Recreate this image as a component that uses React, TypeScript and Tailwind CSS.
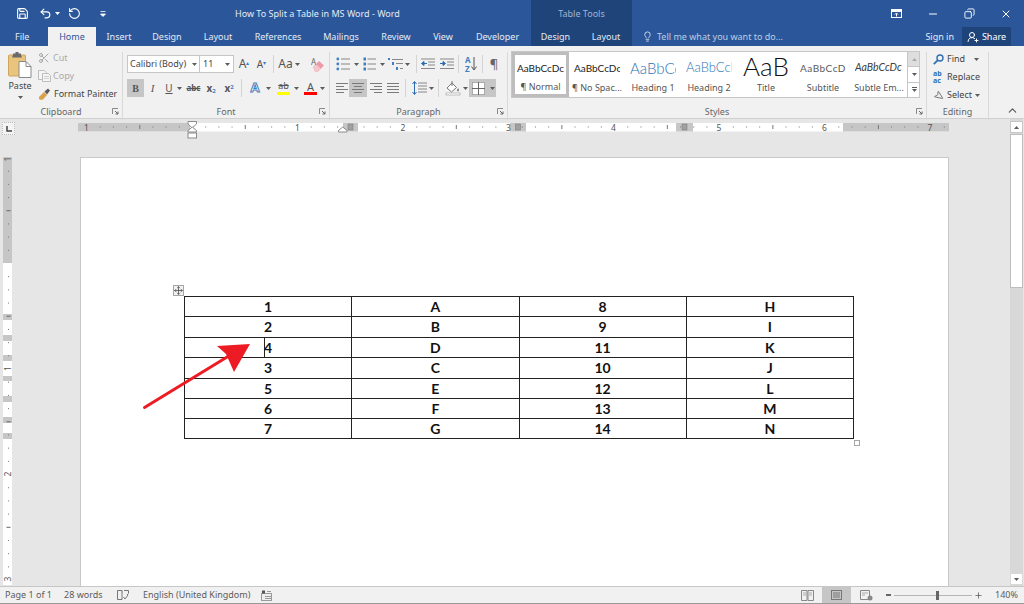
import React from "react";
import { Save, Undo2, RotateCcw, Minus, Copy, X, Lightbulb, UserRoundPlus, Scissors, ChevronUp, MousePointer2, Plus, Move } from "lucide-react";

const tabs = [
  { label: "Insert", w: "w-[46px]" },
  { label: "Design", w: "w-[50px]" },
  { label: "Layout", w: "w-[52px]" },
  { label: "References", w: "w-[68px]" },
  { label: "Mailings", w: "w-[58px]" },
  { label: "Review", w: "w-[52px]" },
  { label: "View", w: "w-[42px]" },
  { label: "Developer", w: "w-[67px]" },
];

const rows = [
  ["1", "A", "8", "H"],
  ["2", "B", "9", "I"],
  ["4", "D", "11", "K"],
  ["3", "C", "10", "J"],
  ["5", "E", "12", "L"],
  ["6", "F", "13", "M"],
  ["7", "G", "14", "N"],
];

const styleItems = [
  { name: "¶ No Spac...", preview: "AaBbCcDc", cls: "text-[10px] text-[#222]", box: "h-[28px] mt-[2px] w-[46px] items-center", w: "w-[56px]" },
  { name: "Heading 1", preview: "AaBbCcDd", cls: "text-[15px] font-light text-[#2e74b5]", box: "h-[28px] mt-[2px] w-[46px] items-center", w: "w-[56px]" },
  { name: "Heading 2", preview: "AaBbCcDd", cls: "text-[13px] font-light text-[#2e74b5]", box: "h-[28px] mt-[2px] w-[46px] items-center", w: "w-[56px]" },
  { name: "Title", preview: "AaB", cls: "text-[26px] leading-[19px] font-light text-[#111]", box: "h-[19px] mt-[5px] mb-[6px] w-[46px] items-end", w: "w-[58px]" },
  { name: "Subtitle", preview: "AaBbCcDd", cls: "text-[10px] tracking-[0.5px] text-[#5a5a5a]", box: "h-[28px] mt-[2px] w-[46px] items-center", w: "w-[56px]" },
  { name: "Subtle Em...", preview: "AaBbCcDc", cls: "text-[10.5px] italic text-[#404040]", box: "h-[28px] mt-[2px] w-[48px] items-center", w: "w-[56px]" },
];

const Caret = ({ className = "" }: { className?: string }) => (
  <svg width="5" height="3" viewBox="0 0 5 3" className={"shrink-0 " + className}>
    <path d="M0 0h5L2.5 3z" fill="#5c5c5c" />
  </svg>
);

const Sep = ({ className = "" }: { className?: string }) => <div className={"h-[18px] w-px bg-[#d4d4d4] shrink-0 " + className} />;

const Launcher = () => (
  <svg width="7" height="7" viewBox="0 0 7 7" className="absolute right-[3px] bottom-[3px]">
    <path d="M0.5 6V0.5H6" fill="none" stroke="#8a8a8a" />
    <path d="M3 3l3 3M6 3.5V6H3.5" fill="none" stroke="#666" />
  </svg>
);

const Group = ({ label, w, launcher = true, children }: { label: string; w: string; launcher?: boolean; children: React.ReactNode }) => (
  <div className={"relative flex flex-col shrink-0 " + w}>
    <div className="h-[59px]">{children}</div>
    <div className="h-[12px] leading-[12px] text-center text-[9px] text-[#666]">{label}</div>
    {launcher && <Launcher />}
  </div>
);

const GroupSep = () => <div className="w-px h-[68px] mt-[3px] bg-[#d9d9d9] shrink-0" />;

// small line-glyph icons of the paragraph group
const Bars = ({ lines, w = 13 }: { lines: [number, number][]; w?: number }) => (
  <svg width={w} height="12" viewBox={`0 0 ${w} 12`} className="shrink-0">
    {lines.map(([a, b], i) => (
      <rect key={i} x={a} y={1 + i * 3} width={b - a} height="1" fill="#7a7a7a" />
    ))}
  </svg>
);

const Bullets = () => (
  <svg width="14" height="14" viewBox="0 0 14 14" className="shrink-0">
    {[2, 7, 12].map((y) => (
      <g key={y}>
        <circle cx="1.8" cy={y} r="1.4" fill="#3f7fc1" />
        <rect x="5" y={y - 0.5} width="9" height="1" fill="#888" />
      </g>
    ))}
  </svg>
);

const Numbering = () => (
  <svg width="13" height="14" viewBox="0 0 13 14" className="shrink-0">
    {[2, 7, 12].map((y) => (
      <g key={y}>
        <rect x="0.5" y={y - 1.5} width="2.5" height="3" fill="#3f7fc1" />
        <rect x="4.5" y={y - 0.5} width="8.5" height="1" fill="#888" />
      </g>
    ))}
  </svg>
);

const Multilevel = () => (
  <svg width="16" height="14" viewBox="0 0 16 14" className="shrink-0">
    <rect x="0" y="1" width="2" height="2" fill="#3f7fc1" />
    <rect x="4" y="2" width="11" height="1" fill="#888" />
    <rect x="4" y="5" width="2" height="3" fill="#3f7fc1" />
    <rect x="8" y="6" width="7" height="1" fill="#888" />
    <rect x="8" y="10" width="2" height="3" fill="#3f7fc1" />
    <rect x="12" y="11" width="3" height="1" fill="#888" />
  </svg>
);

const Indent = ({ flip = false }: { flip?: boolean }) => (
  <svg width="14" height="12" viewBox="0 0 14 12" className="shrink-0">
    <path d="M0 1h14M7 4h7M7 7h7M0 10.5h14" stroke="#888" fill="none" />
    {flip ? <path d="M0 5.5h4M3 3.5l2.5 2-2.5 2z" stroke="#2b6cb0" fill="#2b6cb0" /> : <path d="M6 5.5H2M3 3.5l-2.5 2 2.5 2z" stroke="#2b6cb0" fill="#2b6cb0" />}
  </svg>
);

const Sort = () => (
  <div className="flex items-center w-[14px] shrink-0">
    <div className="flex flex-col leading-[9px] text-[8px] font-bold text-[#3f7fc1]">
      <span>A</span>
      <span>Z</span>
    </div>
    <svg width="6" height="14" viewBox="0 0 6 14">
      <path d="M3 0v12M0.5 9.5L3 13l2.5-3.5" stroke="#555" fill="none" />
    </svg>
  </div>
);

const LineSpacing = () => (
  <svg width="15" height="14" viewBox="0 0 15 14" className="shrink-0">
    <path d="M2.5 1v12M0.5 3L2.5 0.5 4.5 3M0.5 11l2 2.5 2-2.5" stroke="#2b6cb0" fill="none" />
    <path d="M6 2h9M6 5h9M6 8h9M6 11h9" stroke="#888" />
  </svg>
);

const Bucket = () => (
  <svg width="16" height="16" viewBox="0 0 16 16" className="shrink-0">
    <path d="M2 8l5-5 4.5 4.5-5 4.5z" fill="#fff" stroke="#777" />
    <path d="M7 1v5" stroke="#777" />
    <path d="M13 8c1 1.500 1.500 2.500 0.5 3.200-1 .5-1.800-.6-1.200-1.400z" fill="#777" />
    <rect x="1" y="13" width="14" height="2" fill="#fff" stroke="#9a9a9a" strokeWidth="0.6" />
  </svg>
);

const BorderGrid = () => (
  <svg width="13" height="13" viewBox="0 0 13 13" className="shrink-0">
    <rect x="0.500" y="0.500" width="12" height="12" fill="#fff" stroke="#777" strokeDasharray="1 1" />
    <path d="M6.500 0v13M0 6.500h13" stroke="#666" />
  </svg>
);

const PasteIcon = () => (
  <svg width="24" height="26" viewBox="0 0 24 26">
    <rect x="0.500" y="3" width="17" height="21" rx="1" fill="#e9c47c" stroke="#cda65c" />
    <path d="M5 3V1.500h2.500V0h3v1.500H13V3l1 2.500H4z" fill="#6b6b6b" />
    <path d="M11 9.500h7l5 5v11H11z" fill="#fff" stroke="#8a8a8a" />
    <path d="M18 9.500v5h5" fill="none" stroke="#8a8a8a" />
  </svg>
);

const CopyIcon = () => (
  <svg width="13" height="12" viewBox="0 0 13 12" className="shrink-0">
    <path d="M0.500 0.500h6l2 2v7h-8z" fill="#f5f5f5" stroke="#bdbdbd" />
    <path d="M4.500 3.500h6l2 2v6h-8z" fill="#f5f5f5" stroke="#bdbdbd" />
    <path d="M6 6.500h5M6 8.500h5" stroke="#cfcfcf" />
  </svg>
);

const BrushIcon = () => (
  <svg width="13" height="12" viewBox="0 0 13 12" className="shrink-0">
    <path d="M1 9l5-5 3 3-4 4.500c-1 .5-3 .5-4-.5z" fill="#d9a24a" />
    <path d="M6.500 3.500L10 0.500l2 2-3 4z" fill="#5a5a5a" />
  </svg>
);

const Eraser = () => (
  <svg width="14" height="17" viewBox="0 0 14 17">
    <path d="M2 11l6-6 5 4.500-6 6H4z" fill="#ee9aa6" />
    <path d="M2 11l3-3 4.500 4.500L7 15.500H4z" fill="#f7c5cc" />
    <text x="0" y="9" fontSize="8" fill="#666" fontFamily="Noto Sans">A</text>
  </svg>
);

const FindIcon = () => (
  <svg width="11" height="11" viewBox="0 0 11 11" className="shrink-0">
    <circle cx="7" cy="4" r="3" fill="none" stroke="#2f6fb5" strokeWidth="1.400" />
    <path d="M4.800 6.200L0.800 10.200" stroke="#2f6fb5" strokeWidth="1.800" />
  </svg>
);

const Arrow = () => (
  <svg width="115" height="72" viewBox="140 340 115 72" className="absolute left-[59px] top-[182px]">
    <path d="M144.500 407.500L232 354" stroke="#ed1c24" strokeWidth="3" strokeLinecap="round" fill="none" />
    <path d="M250 344L217 346L226 354L234 372z" fill="#ed1c24" />
  </svg>
);

const HRuler = () => {
  const ticks: React.ReactNode[] = [];
  for (let i = -9; i <= 57; i++) {
    const x = 192 + i * 13.19;
    if (i % 8 === 0) continue;
    if (i % 4 === 0) ticks.push(<rect key={i} x={x} y="125" width="1" height="4" fill="#777" />);
    else ticks.push(<rect key={i} x={x} y="126.500" width="1" height="1" fill="#777" />);
  }
  const nums: [number, string][] = [[86.500, "1"], [297.500, "1"], [403, "2"], [508.500, "3"], [613.500, "4"], [719, "5"], [824.500, "6"], [930, "7"]];
  return (
    <svg width="880" height="20" viewBox="78 120 880 20" className="shrink-0 mt-px">
      <rect x="78" y="123" width="871" height="8.500" fill="#fff" />
      <rect x="78" y="123" width="112" height="8.500" fill="#c6c6c6" />
      {[[343, 15], [510, 16], [676, 17], [843, 106]].map(([x, w]) => (
        <rect key={x} x={x} y="123" width={w} height="8.500" fill="#c6c6c6" />
      ))}
      {ticks}
      {nums.map(([x, t]) => (
        <text key={x} x={x} y="130.500" textAnchor="middle" fontSize="8.500" fill="#555" fontFamily="Noto Sans">{t}</text>
      ))}
      {[350.500, 518, 684.500].map((x) => (
        <rect key={x} x={x - 2.500} y="124" width="5" height="6" fill="#a0a0a0" stroke="#777" strokeWidth="0.500" />
      ))}
      <path d="M188 121.500h8.500v2.500l-4.250 4-4.250-4z" fill="#fff" stroke="#8a8a8a" />
      <path d="M188 132v-1.500l4.250-3.500 4.250 3.500V132z" fill="#fff" stroke="#8a8a8a" />
      <rect x="188" y="133" width="8.500" height="5" fill="#fff" stroke="#8a8a8a" />
      <path d="M338.500 132v-1.500l4.250-3.500 4.250 3.500V132z" fill="#fff" stroke="#8a8a8a" />
    </svg>
  );
};

const VRuler = () => {
  const ticks: React.ReactNode[] = [];
  for (let i = -7; i <= 24; i++) {
    const y = 263 + i * 13.19;
    if (i % 8 === 0) continue;
    if (i % 4 === 0) ticks.push(<rect key={i} x="6.500" y={y} width="4" height="1" fill="#666" />);
    else ticks.push(<rect key={i} x="8" y={y} width="1" height="1" fill="#777" />);
  }
  const nums: [number, string][] = [[159, "1"], [368.500, "1"], [474, "2"], [579, "3"]];
  const grey: [number, number][] = [[157, 106], [314, 6], [335, 6], [355, 6], [376, 5], [396, 6], [417, 6], [433, 6]];
  return (
    <svg width="80" height="428" viewBox="0 157 80 428" className="shrink-0">
      <rect x="3" y="157" width="9" height="428" fill="#fff" />
      {grey.map(([y, h]) => (
        <rect key={y} x="3" y={y} width="9" height={h} fill="#c6c6c6" />
      ))}
      {ticks}
      {nums.map(([y, t]) => (
        <text key={y} transform={`translate(11 ${y}) rotate(-90)`} textAnchor="middle" fontSize="8.500" fill="#555" fontFamily="Noto Sans">{t}</text>
      ))}
    </svg>
  );
};

export default function App() {
  return (
    <div className="w-[1024px] h-[604px] overflow-hidden flex flex-col bg-[#e6e6e6] font-['Noto_Sans',sans-serif] text-[9px] text-[#555]">
      {/* title bar */}
      <div className="h-[27px] flex bg-[#2b579a] text-[#e4ebf5] shrink-0">
        <div className="w-[531px] flex items-center shrink-0 relative">
          <Save size={13} className="ml-[16px] text-white" />
          <Undo2 size={13} className="ml-[10px] text-white" />
          <Caret className="ml-[3px] [&>path]:fill-white" />
          <RotateCcw size={13} className="ml-[8px] text-white" />
          <svg width="6" height="6" viewBox="0 0 6 6" className="ml-[19px]">
            <path d="M0.500 0.500h5M0.500 3h5l-2.500 2.500z" stroke="#fff" strokeWidth="0.800" fill="#fff" />
          </svg>
          <span className="ml-[129px] whitespace-nowrap">How To Split a Table in MS Word - Word</span>
        </div>
        <div className="w-[101px] bg-[#1f4479] flex items-center justify-center text-[#9fb4d3] shrink-0">Table Tools</div>
        <div className="flex-1 flex items-center justify-end">
          <svg width="11" height="9" viewBox="0 0 11 9" className="mr-[25px]">
            <rect x="0.500" y="0.500" width="10" height="8" fill="#2b579a" stroke="#fff" />
            <path d="M1 1h9v2H1z" fill="#fff" />
            <path d="M5.500 7.500v-3M4 5.500l1.500-1.500L7 5.500" stroke="#fff" fill="none" />
          </svg>
          <Minus size={12} className="mr-[25px] text-white" />
          <Copy size={11} className="mr-[25px] text-white -scale-x-100" />
          <X size={12} className="mr-[12px] text-white" />
        </div>
      </div>

      {/* tabs */}
      <div className="h-[19px] flex bg-[#2b579a] text-[#e4ebf5] leading-[19px] shrink-0">
        <div className="w-[48px] pl-[15px] shrink-0">File</div>
        <div className="w-[48px] text-center bg-[#f1f1f1] text-[#2b579a] shrink-0">Home</div>
        {tabs.map((t) => (
          <div key={t.label} className={"text-center shrink-0 " + t.w}>{t.label}</div>
        ))}
        <div className="w-[49px] text-center bg-[#1f4479] shrink-0">Design</div>
        <div className="w-[52px] text-center bg-[#1f4479] shrink-0">Layout</div>
        <div className="flex-1 flex items-center">
          <Lightbulb size={11} className="ml-[10px] text-[#d5e0ef]" />
          <span className="ml-[4px] text-[#bccde4]">Tell me what you want to do...</span>
          <span className="ml-auto">Sign in</span>
          <div className="ml-[8px] mr-[13px] w-[49px] h-[19px] bg-[#1f4479] flex items-center justify-center gap-[3px] text-white">
            <UserRoundPlus size={12} />
            <span>Share</span>
          </div>
        </div>
      </div>

      {/* ribbon */}
      <div className="h-[73px] flex bg-[#f1f1f1] border-b border-[#d0d0d0] pt-[3px] shrink-0">
        <Group label="Clipboard" w="w-[122px]">
          <div className="flex">
            <div className="w-[38px] flex flex-col items-center pt-[3px] pl-[2px] text-[#444]">
              <PasteIcon />
              <span className="mt-[1px] leading-[13px]">Paste</span>
              <Caret className="mt-[4px]" />
            </div>
            <div className="flex flex-col pt-[0px]">
              <div className="h-[18px] flex items-center gap-[3px] text-[#aaa]"><Scissors size={12} className="text-[#a8a8a8]" />Cut</div>
              <div className="h-[18px] flex items-center gap-[2px] text-[#aaa]"><CopyIcon />Copy</div>
              <div className="h-[18px] flex items-center gap-[3px] whitespace-nowrap text-[#444]"><BrushIcon />Format Painter</div>
            </div>
          </div>
        </Group>
        <GroupSep />

        <Group label="Font" w="w-[206px]">
          <div className="pl-[4px] pt-[6px] flex flex-col gap-[6px]">
            <div className="h-[18px] flex items-center">
              <div className="w-[73px] h-[18px] bg-white border border-[#c6c6c6] flex items-center justify-between px-[2px] text-[#444] whitespace-nowrap">Calibri (Body)<Caret /></div>
              <div className="w-[34px] h-[18px] bg-white border border-l-0 border-[#c6c6c6] flex items-center justify-between px-[3px] text-[#444]">11<Caret /></div>
              <div className="w-[18px] ml-[1px] text-center text-[12px] text-[#555]">A<sup className="text-[#3f7fc1] text-[6px]">▴</sup></div>
              <div className="w-[17px] text-center text-[10px] text-[#555]">A<sup className="text-[#3f7fc1] text-[6px]">▾</sup></div>
              <Sep className="ml-[3px]" />
              <div className="w-[30px] flex items-center justify-center gap-[2px] text-[12px] text-[#555]">Aa<Caret /></div>
              <div className="ml-[7px]"><Eraser /></div>
            </div>
            <div className="h-[18px] flex items-center">
              <div className="w-[17px] h-[18px] bg-[#c6c6c6] flex items-center justify-center font-bold text-[10px] font-['Liberation_Serif',serif]">B</div>
              <div className="w-[17px] text-center italic text-[11px] font-['Liberation_Serif',serif]">I</div>
              <div className="w-[16px] text-center underline text-[10px]">U</div>
              <Caret />
              <div className="w-[19px] ml-[2px] text-center line-through font-bold text-[8px]">abc</div>
              <div className="w-[18px] ml-[-1px] text-center font-bold text-[10px]">x<sub className="text-[#3f7fc1] text-[6px]">2</sub></div>
              <div className="w-[18px] text-center font-bold text-[10px]">x<sup className="text-[#3f7fc1] text-[6px]">2</sup></div>
              <Sep className="ml-[3px]" />
              <div className="w-[20px] ml-[3px] text-center font-bold text-[13px] text-white [-webkit-text-stroke:1px_#3f7fc1]">A</div>
              <Caret className="ml-[1px]" />
              <div className="w-[15px] ml-[5px] flex flex-col items-center leading-[10px]">
                <span className="text-[9px] line-through">ab</span>
                <span className="w-[13px] h-[3px] bg-[#ffff00] mt-[1px]" />
              </div>
              <Caret className="ml-[3px]" />
              <div className="w-[15px] ml-[4px] flex flex-col items-center leading-[11px]">
                <span className="text-[11px]">A</span>
                <span className="w-[13px] h-[3px] bg-[#ff0000]" />
              </div>
              <Caret className="ml-[2px]" />
            </div>
          </div>
        </Group>
        <GroupSep />

        <Group label="Paragraph" w="w-[177px]">
          <div className="pl-[6px] pt-[6px] flex flex-col gap-[6px]">
            <div className="h-[18px] flex items-center">
              <Bullets />
              <Caret className="ml-[4px]" />
              <div className="w-[4px]" />
              <Numbering />
              <Caret className="ml-[4px]" />
              <div className="w-[3px]" />
              <Multilevel />
              <Caret className="ml-[1px]" />
              <Sep className="ml-[6px]" />
              <div className="ml-[4px]"><Indent /></div>
              <div className="ml-[5px]"><Indent flip /></div>
              <Sep className="ml-[4px]" />
              <div className="ml-[6px]"><Sort /></div>
              <Sep className="ml-[3px]" />
              <div className="w-[14px] ml-[4px] text-center text-[13px] leading-[18px] text-[#666]">¶</div>
            </div>
            <div className="h-[18px] flex items-center">
              <Bars lines={[[0, 12], [0, 8], [0, 12], [0, 8]]} />
              <div className="w-[18px] h-[18px] bg-[#c6c6c6] flex items-center justify-center"><Bars lines={[[0, 12], [2, 10], [0, 12], [2, 10]]} /></div>
              <div className="ml-[3px]"><Bars lines={[[0, 12], [4, 12], [0, 12], [4, 12]]} /></div>
              <div className="ml-[4px]"><Bars lines={[[0, 12], [0, 12], [0, 12], [0, 12]]} /></div>
              <Sep className="ml-[5px]" />
              <div className="ml-[6px]"><LineSpacing /></div>
              <Caret className="ml-[2px]" />
              <Sep className="ml-[4px]" />
              <div className="ml-[6px]"><Bucket /></div>
              <Caret className="ml-[2px]" />
              <div className="ml-[1px] w-[27px] h-[18px] bg-[#c6c6c6] flex items-center pl-[3px] gap-[3px]"><BorderGrid /><Caret className="ml-[2px]" /></div>
            </div>
          </div>
        </Group>
        <GroupSep />

        <Group label="Styles" w="w-[418px]">
          <div className="pl-[3px] pt-[2px]">
            <div className="w-[409px] h-[47px] flex bg-white border border-[#c6c6c6] overflow-hidden">
              <div className="w-[57px] shrink-0 border-[3px] border-[#bdbdbd] flex flex-col items-center justify-between overflow-hidden">
                <div className="h-[27px] flex items-center text-[10px] text-[#222] font-['Lato',sans-serif] whitespace-nowrap">AaBbCcDc</div>
                <div className="whitespace-nowrap text-[#555] leading-[12px] mb-[1px]">¶ Normal</div>
              </div>
              {styleItems.map((s) => (
                <div key={s.name} className={"shrink-0 flex flex-col items-center justify-between overflow-hidden " + s.w}>
                  <div className={"flex justify-start overflow-hidden whitespace-nowrap font-['Lato',sans-serif] " + s.box + " " + s.cls}>{s.preview}</div>
                  <div className="whitespace-nowrap text-[#555] leading-[12px] mb-[3px]">{s.name}</div>
                </div>
              ))}
              <div className="w-[13px] ml-auto shrink-0 flex flex-col border-l border-[#c6c6c6]">
                <div className="flex-1 bg-[#dedede] flex items-center justify-center"><Caret className="rotate-180 opacity-40" /></div>
                <div className="flex-1 flex items-center justify-center border-y border-[#c6c6c6]"><Caret /></div>
                <div className="flex-1 flex flex-col gap-[1px] items-center justify-center"><span className="w-[5px] h-px bg-[#5c5c5c]" /><Caret /></div>
              </div>
            </div>
          </div>
        </Group>
        <GroupSep />

        <Group label="Editing" w="w-[61px]" launcher={false}>
          <div className="pl-[6px] pt-[1px] flex flex-col text-[#444]">
            <div className="h-[18px] flex items-center gap-[3px]"><FindIcon />Find<Caret className="ml-[6px]" /></div>
            <div className="h-[18px] flex items-center gap-[2px]">
              <div className="w-[12px] flex flex-col leading-[7px] text-[7px] font-bold text-[#2f6fb5]"><span>ab</span><span>ac</span></div>
              Replace
            </div>
            <div className="h-[18px] flex items-center gap-[3px]"><MousePointer2 size={11} className="text-[#777] -scale-x-100 rotate-[80deg]" />Select<Caret /></div>
          </div>
        </Group>
        <GroupSep />
        <div className="flex-1 flex items-end justify-end pr-[5px] pb-[1px]"><ChevronUp size={13} className="text-[#555]" /></div>
      </div>

      {/* document area */}
      <div className="flex-1 flex min-h-0">
        <div className="flex-1 flex flex-col min-w-0">
          <div className="h-[38px] flex items-start shrink-0">
            <div className="w-[78px] shrink-0 pl-[2px] pt-[3px]">
              <div className="w-[13px] h-[13px] bg-[#f4f4f4] border border-dotted border-[#bbb] flex items-center justify-center">
                <svg width="6" height="6" viewBox="0 0 6 6"><path d="M1 0v5h5" fill="none" stroke="#444" strokeWidth="1.500" /></svg>
              </div>
            </div>
            <HRuler />
          </div>
          <div className="flex-1 flex min-h-0">
            <VRuler />
            <div className="relative w-[869px] bg-white border-l border-t border-r border-[#c9c9c9] shrink-0">
              <div className="relative ml-[103px] mt-[138px] w-[670px]">
                <table className="w-[670px] table-fixed border-collapse font-['Lato',sans-serif] font-bold text-[14px] text-[#111]">
                  <tbody>
                    {rows.map((r, i) => (
                      <tr key={r[0]} className={i === 1 || i === 3 ? "h-[21px]" : "h-[20px]"}>
                        {r.map((c, j) => (
                          <td key={c} className="border border-[#222] p-0 text-center leading-[18px]">
                            <span className="relative">
                              {i === 2 && j === 0 && <span className="absolute left-[0px] top-[-1px] w-px h-[19px] bg-[#222]" />}
                              {c}
                            </span>
                          </td>
                        ))}
                      </tr>
                    ))}
                  </tbody>
                </table>
                <div className="absolute left-[-11px] top-[-11px] w-[11px] h-[11px] bg-[#f1f1f1] border border-[#a6a6a6] flex items-center justify-center">
                  <Move size={9} className="text-[#444]" />
                </div>
                <div className="absolute right-[-6px] bottom-[-7px] w-[6px] h-[6px] bg-white border border-[#a6a6a6]" />
              </div>
              <Arrow />
            </div>
          </div>
        </div>
        {/* scrollbar */}
        <div className="w-[13px] mr-px flex flex-col bg-[#d8d8d8] shrink-0 pt-[2px]">
          <div className="h-[12px] bg-white border border-[#c6c6c6] flex items-center justify-center shrink-0"><Caret className="rotate-180" /></div>
          <div className="h-[154px] mt-px bg-white border border-[#bdbdbd] shrink-0" />
          <div className="flex-1" />
          <div className="h-[12px] mb-[1px] bg-white border border-[#d8d8d8] flex items-center justify-center shrink-0"><Caret /></div>
        </div>
      </div>

      {/* status bar */}
      <div className="h-[18px] flex items-center bg-[#f1f1f1] border-t border-b border-t-[#c6c6c6] border-b-[#9a9a9a] text-[#5c5c5c] shrink-0">
        <span className="ml-[5px] w-[59px] shrink-0">Page 1 of 1</span>
        <span className="w-[53px] shrink-0">28 words</span>
        <svg width="12" height="11" viewBox="0 0 12 11" className="shrink-0">
          <path d="M0.500 0.500h4.500v9H0.500zM5 2h0.500M7 0.500h4.500v3L10 5" fill="none" stroke="#777" />
          <path d="M6.500 7l1.500 2 3-4" fill="none" stroke="#777" />
        </svg>
        <span className="ml-[14px] w-[118px] shrink-0">English (United Kingdom)</span>
        <svg width="11" height="11" viewBox="0 0 11 11" className="shrink-0">
          <rect x="0.500" y="3.500" width="10" height="7" fill="#eee" stroke="#999" />
          <rect x="1" y="0.500" width="3" height="3" fill="#555" />
          <path d="M6 1.500h4M4 6.500h6M4 8.500h6" stroke="#999" />
        </svg>
        <div className="ml-auto flex items-center h-[16px]">
          <svg width="13" height="11" viewBox="0 0 13 11">
            <path d="M0.500 0.500H6v10H0.500zM7 0.500h5.500v10H7z" fill="none" stroke="#888" />
            <path d="M2 3h3M2 5h3M8 3h3M8 5h3" stroke="#aaa" />
          </svg>
          <div className="ml-[8px] w-[29px] h-[16px] bg-[#c6c6c6] flex items-center justify-center">
            <svg width="11" height="10" viewBox="0 0 11 10">
              <rect x="0.500" y="0.500" width="10" height="9" fill="none" stroke="#777" />
              <path d="M2 3h7M2 5h7M2 7h7" stroke="#777" />
            </svg>
          </div>
          <svg width="13" height="11" viewBox="0 0 13 11" className="ml-[9px]">
            <path d="M0.500 0.500h9v9h-9z" fill="none" stroke="#888" />
            <path d="M2 3h6M2 5h3" stroke="#aaa" />
            <circle cx="10" cy="8" r="2.500" fill="#888" />
          </svg>
          <div className="ml-[13px] w-[5px] h-[2px] bg-[#666]" />
          <div className="ml-[3px] w-[78px] h-[10px] flex items-center">
            <div className="w-[42px] h-px bg-[#b5b5b5]" />
            <div className="w-[3px] h-[9px] bg-[#666]" />
            <div className="flex-1 h-px bg-[#b5b5b5]" />
          </div>
          <Plus size={9} className="ml-[2px] text-[#555]" />
          <span className="ml-[12px] mr-[6px]">140%</span>
        </div>
      </div>
    </div>
  );
}
